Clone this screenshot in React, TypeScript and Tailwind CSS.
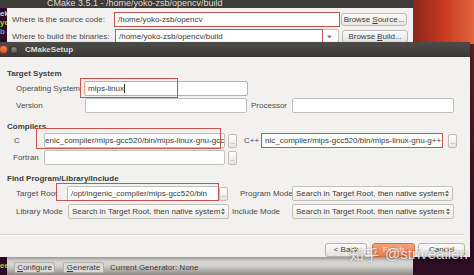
import React from 'react';

const fieldBase =
  "h-[15px] shrink-0 bg-white border border-[#c3c0bb] rounded-[2px] px-[3px] flex items-center overflow-hidden whitespace-nowrap text-[8px] text-[#3a3a3a]";

function Dots() {
  return (
    <div className="w-[9px] h-[14px] shrink-0 border border-[#c0bdb8] rounded-[2px] bg-linear-to-b from-white to-[#e6e4e1] flex items-end justify-center pb-[2px] text-[6px] leading-[6px] text-[#666]">
      ...
    </div>
  );
}

function Spinner() {
  return (
    <svg width="4" height="7" viewBox="0 0 4 7" className="shrink-0">
      <path d="M0 2.8 L2 0.6 L4 2.8Z M0 4.2 L2 6.4 L4 4.2Z" fill="#5a5a5a" />
    </svg>
  );
}

function Combo({ w }: { w: string }) {
  return (
    <div
      className={`${w} h-[15px] shrink-0 border border-[#c3c0bb] rounded-[2px] bg-linear-to-b from-[#fdfdfc] to-[#efedea] flex items-center justify-between px-[3px] text-[8px] text-[#3a3a3a] whitespace-nowrap overflow-hidden`}
    >
      <span>Search in Target Root, then native system</span>
      <Spinner />
    </div>
  );
}

function Label({ w, children }: { w: string; children: React.ReactNode }) {
  return <div className={`${w} shrink-0 text-[8px] text-[#4a4a4a] whitespace-nowrap`}>{children}</div>;
}

function Heading({ children, mt }: { children: React.ReactNode; mt: string }) {
  return (
    <div className={`${mt} h-[10px] leading-[10px] pl-[7px] text-[8px] font-bold text-[#3c3c3c]`}>{children}</div>
  );
}

function DlgButton({ w, children, primary }: { w: string; children: React.ReactNode; primary?: boolean }) {
  return (
    <div
      className={`${w} h-[14px] rounded-[3px] border flex items-center justify-center text-[8px] ${
        primary
          ? 'border-[#d8703f] bg-linear-to-b from-[#f6a27a] to-[#ee7a48] text-[#fde3d4]'
          : 'border-[#b8b5b0] bg-linear-to-b from-[#fcfcfb] to-[#e4e2df] text-[#3c3c3c]'
      }`}
    >
      {children}
    </div>
  );
}

export default function App() {
  return (
    <div
      className="relative w-[474px] h-[275px] overflow-hidden bg-[#2c0d22]"
      style={{ fontFamily: '"Liberation Sans", Arial, "Noto Sans CJK SC", sans-serif' }}
    >
      {/* desktop wallpaper, top right */}
      <div className="absolute left-[413px] top-0 w-[61px] h-[44px] bg-linear-to-r from-[#8a2819] via-[#c8391f] to-[#e2643c]" />
      {/* desktop, right strip */}
      <div className="absolute left-[466px] top-[44px] w-[8px] h-[214px] bg-linear-to-b from-[#5e2218] to-[#2a0d22]" />

      {/* terminal behind, left */}
      <div className="absolute left-0 top-0 w-[8px] h-[275px] bg-[#2e0b24] flex flex-col text-[8px] leading-[9px] font-bold overflow-hidden">
        <div className="h-[8px] bg-[#3c3b37]" />
        <span className="text-[#d8d8d8] mt-[1px]">ek</span>
        <span className="text-[#8ae234]">yo</span>
        <span className="text-[#729fcf]">b</span>
        <span className="text-[#8ae234] mt-auto mb-[5px]">ee</span>
      </div>

      {/* main CMake window */}
      <div className="absolute left-[7px] top-0 w-[406px] h-[275px] flex flex-col bg-[#f2f1f0]">
        <div className="h-[8px] shrink-0 bg-[#3c3b37] flex items-end overflow-hidden pl-[40px]">
          <span className="text-[9px] leading-[9px] text-[#dfdbd2] whitespace-nowrap">
            CMake 3.5.1 - /home/yoko-zsb/opencv/build
          </span>
        </div>
        <div className="pl-[5px] pt-[4px] flex flex-col">
          <div className="flex items-center h-[15px]">
            <Label w="w-[102px]">Where is the source code:</Label>
            <div className={`${fieldBase} w-[226px]`}>/home/yoko-zsb/opencv</div>
            <div className="ml-[1px] w-[66px] h-[13px] rounded-[3px] border border-[#bcb9b4] bg-linear-to-b from-[#fbfbfa] to-[#e7e5e2] flex items-center justify-center text-[8px] text-[#3c3c3c]">
              Browse <span className="underline ml-[2px]">S</span>ource...
            </div>
          </div>
          <div className="flex items-center h-[15px] mt-[2px]">
            <Label w="w-[103px]">Where to build the binaries:</Label>
            <div className={`${fieldBase} w-[224px] justify-between`}>
              <span>/home/yoko-zsb/opencv/build</span>
              <svg width="5" height="4" viewBox="0 0 5 4" className="mr-[3px]">
                <path d="M0 0.5 L5 0.5 L2.5 3.5Z" fill="#777" />
              </svg>
            </div>
            <div className="ml-[3px] w-[66px] h-[13px] rounded-[3px] border border-[#bcb9b4] bg-linear-to-b from-[#fbfbfa] to-[#e7e5e2] flex items-center justify-center text-[8px] text-[#3c3c3c]">
              Browse <span className="underline ml-[2px]">B</span>uild...
            </div>
          </div>
        </div>
        <div className="mt-auto h-[18px] bg-linear-to-b from-[#e9e7e4] via-[#d2d0cc] to-[#8d8a85] flex items-start pt-[5px] pl-[7px] gap-[8px]">
          <div className="w-[41px] h-[11px] rounded-[2px] border border-[#b3b0ab] bg-[#dcdad6] flex items-center justify-center text-[8px] text-[#3c3c3c]">
            <span className="underline">C</span>onfigure
          </div>
          <div className="w-[41px] h-[11px] rounded-[2px] border border-[#b3b0ab] bg-[#dcdad6] flex items-center justify-center text-[8px] text-[#3c3c3c]">
            <span className="underline">G</span>enerate
          </div>
          <span className="text-[8px] leading-[11px] text-[#3c3c3c] -ml-[2px]">Current Generator: None</span>
        </div>
      </div>

      {/* annotation boxes on the main window */}
      <div className="absolute left-[114px] top-[12px] w-[226px] h-[15px] border border-[#c4544c]" />
      <div className="absolute left-[115px] top-[29px] w-[208px] h-[15px] border border-[#c4544c]" />

      {/* CMakeSetup dialog */}
      <div className="absolute left-0 top-[42px] w-[470px] h-[215px] flex flex-col bg-[#f2f1f0] shadow-[0_2px_4px_rgba(0,0,0,0.4)]">
        <div className="h-[15px] shrink-0 bg-linear-to-b from-[#4d4c48] to-[#3a3935] flex items-center">
          <div className="-ml-[1px] w-[9px] h-[9px] rounded-full bg-linear-to-b from-[#f58a5c] to-[#df4b20] border border-[#9a3a1a]" />
          <div className="ml-[2px] w-[8px] h-[8px] rounded-full bg-linear-to-b from-[#8c8a85] to-[#5f5d59] border border-[#2e2d2a]" />
          <span className="ml-[7px] text-[8px] font-bold text-[#dfdbd2]">CMakeSetup</span>
        </div>

        <Heading mt="mt-[12px]">Target System</Heading>
        <div className="mt-[2px] flex items-center pl-[16px]">
          <Label w="w-[68px]">Operating System</Label>
          <div className={`${fieldBase} w-[164px] border-[#e3a17f]`}>
            mips-linux<span className="w-[1px] h-[9px] bg-[#333]" />
          </div>
        </div>
        <div className="mt-[2px] flex items-center pl-[16px]">
          <Label w="w-[69px]">Version</Label>
          <div className={`${fieldBase} w-[162px]`} />
          <div className="ml-[4px]">
            <Label w="w-[41px]">Processor</Label>
          </div>
          <div className={`${fieldBase} w-[162px]`} />
        </div>

        <Heading mt="mt-[9px]">Compilers</Heading>
        <div className="mt-[1px] flex items-center pl-[14px]">
          <Label w="w-[30px]">C</Label>
          <div className={`${fieldBase} w-[181px]`}>
            <span className="-ml-[3px]">enic_compiler/mips-gcc520/bin/mips-linux-gnu-gcc</span>
          </div>
          <div className="ml-[3px]">
            <Dots />
          </div>
          <div className="ml-[7px]">
            <Label w="w-[17px]">C++</Label>
          </div>
          <div className={`${fieldBase} w-[182px]`}>nic_compiler/mips-gcc520/bin/mips-linux-gnu-g++</div>
          <div className="ml-[5px]">
            <Dots />
          </div>
        </div>
        <div className="mt-[2px] flex items-center pl-[13px]">
          <Label w="w-[31px]">Fortran</Label>
          <div className={`${fieldBase} w-[181px]`} />
          <div className="ml-[3px]">
            <Dots />
          </div>
        </div>

        <Heading mt="mt-[9px]">Find Program/Library/Include</Heading>
        <div className="mt-[2px] flex items-center pl-[16px]">
          <Label w="w-[51px]">Target Root</Label>
          <div className={`${fieldBase} w-[152px]`}>/opt/ingenic_compiler/mips-gcc520/bin</div>
          <Dots />
          <div className="ml-[12px]">
            <Label w="w-[52px]">Program Mode</Label>
          </div>
          <Combo w="w-[161px]" />
        </div>
        <div className="mt-[3px] flex items-center pl-[16px]">
          <Label w="w-[52px]">Library Mode</Label>
          <Combo w="w-[161px]" />
          <div className="ml-[3px]">
            <Label w="w-[60px]">Include Mode</Label>
          </div>
          <Combo w="w-[162px]" />
        </div>

        <div className="mt-[15px] h-[1px] mr-[6px] bg-[#d3d0cb] border-b border-white box-content" />

        <div className="mt-[7px] flex justify-end pr-[5px]">
          <DlgButton w="w-[42px]">&lt; Back</DlgButton>
          <div className="ml-[5px]">
            <DlgButton w="w-[43px]" primary>
              Finish
            </DlgButton>
          </div>
          <div className="ml-[3px]">
            <DlgButton w="w-[47px]">Cancel</DlgButton>
          </div>
        </div>
      </div>

      {/* annotation boxes on the dialog */}
      <div className="absolute left-[80px] top-[78px] w-[98px] h-[20px] border border-[#c4544c]" />
      <div className="absolute left-[36px] top-[128px] w-[185px] h-[21px] border border-[#c4544c]" />
      <div className="absolute left-[261px] top-[133px] w-[182px] h-[15px] border border-[#c4544c]" />
      <div className="absolute left-[56px] top-[183px] w-[163px] h-[18px] border border-[#c4544c]" />

      {/* watermark */}
      <div className="absolute left-[349px] top-[245px] flex items-center text-[15px] leading-[18px] text-white/80 whitespace-nowrap [text-shadow:0_0_2px_rgba(0,0,0,0.5)]">
        <span style={{ fontFamily: '"Noto Sans CJK SC", sans-serif' }}>知乎</span>
        <span className="ml-[6px]">@striveallen</span>
      </div>
    </div>
  );
}
